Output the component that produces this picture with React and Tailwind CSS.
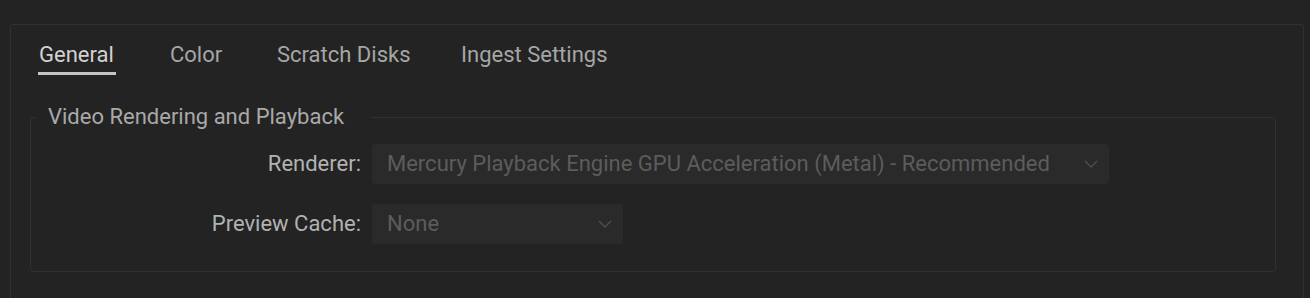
const tabs = [
  { name: 'General', w: 'w-[76px]', active: true },
  { name: 'Color', w: 'w-[52px]' },
  { name: 'Scratch Disks', w: 'w-[129px]' },
  { name: 'Ingest Settings', w: 'w-[141px]' },
];

function Chevron() {
  return (
    <svg width="14" height="8" viewBox="0 0 14 8" fill="none" className="shrink-0">
      <path d="M1 1l6 6 6-6" stroke="#4f4f4f" strokeWidth="1.4" />
    </svg>
  );
}

function Dropdown({ value, width }) {
  return (
    <div className={`${width} h-[40px] flex items-center justify-between pl-[15px] pr-[11px] bg-[#2a2a2a] rounded-[4px]`}>
      <span className="text-[#5c5c5c] whitespace-nowrap">{value}</span>
      <Chevron />
    </div>
  );
}

export default function App() {
  return (
    <div
      className="w-[1310px] h-[298px] overflow-hidden bg-[#232323] pt-[24px] pl-[10px] pr-[6px] text-[22px] leading-[28px]"
      style={{ fontFamily: 'Roboto, "Liberation Sans", sans-serif' }}
    >
      <div className="h-[300px] border border-[#313131] rounded-t-[3px] pl-[19px] pr-[27px]">
        {/* tabs */}
        <div className="flex gap-[55px] pl-[9px] pt-[16px]">
          {tabs.map((t) => (
            <div key={t.name} className={`${t.w} whitespace-nowrap`}>
              <div className={t.active ? 'text-[#d2d2d2]' : 'text-[#a6a6a6]'}>{t.name}</div>
              {t.active && <div className="mt-[3px] -mx-[1px] h-[3px] bg-[#c4c4c4]" />}
            </div>
          ))}
        </div>

        <fieldset className="mt-[28px] border border-[#313131] rounded-[4px] pb-[27px]">
          <legend className="ml-[6px] pl-[11px] pr-[27px] text-[#a9a9a9]">Video Rendering and Playback</legend>
          <div className="grid grid-cols-[330px_auto] gap-x-[11px] gap-y-[20px] items-center pt-[13px] justify-start">
            <div className="text-right text-[#b2b2b2]">Renderer:</div>
            <Dropdown value="Mercury Playback Engine GPU Acceleration (Metal) - Recommended" width="w-[737px]" />
            <div className="text-right text-[#b2b2b2]">Preview Cache:</div>
            <Dropdown value="None" width="w-[251px]" />
          </div>
        </fieldset>
      </div>
    </div>
  );
}
